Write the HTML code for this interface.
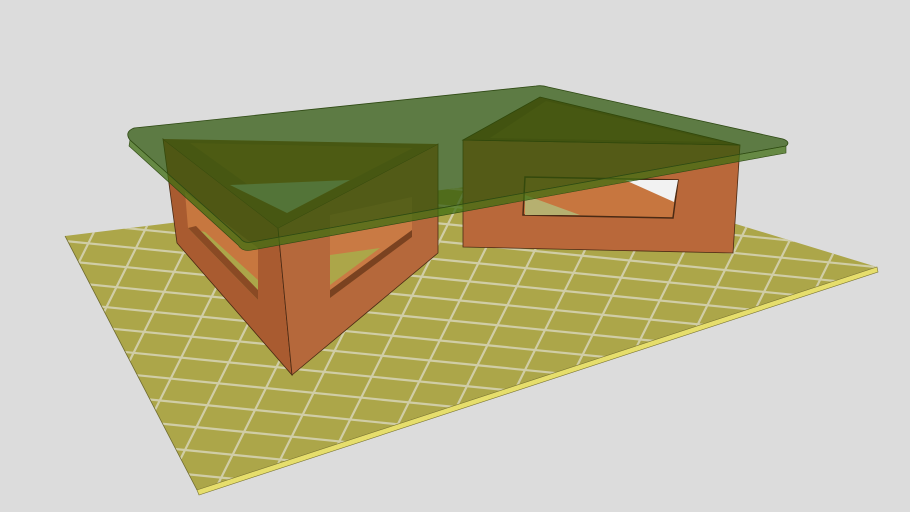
<!DOCTYPE html>
<html><head><meta charset="utf-8"><style>
html,body{margin:0;padding:0;background:#dcdcdc;width:910px;height:512px;overflow:hidden;}
svg{display:block;}
</style></head><body>
<svg width="910" height="512" viewBox="0 0 910 512" xmlns="http://www.w3.org/2000/svg">
<defs>
<clipPath id="rug"><polygon points="65,236 572,174 877,267 197,490"/></clipPath>
</defs>
<rect width="910" height="512" fill="#dcdcdc"/>
<!-- rug -->
<polygon points="65,236 572,174 877,267 197,490" fill="#aca649"/>
<g clip-path="url(#rug)" stroke="#d0cda6" stroke-width="2.2" fill="none">
<path d="M0,143.5L910,234.5M0,161.5L910,252.5M0,179.5L910,270.5M0,197.5L910,288.5M0,215.5L910,306.5M0,234.5L910,325.5M0,254.5L910,345.5M0,275.5L910,366.5M0,296.5L910,387.5M0,317.5L910,408.5M0,339.5L910,430.5M0,361.5L910,452.5M0,384.5L910,475.5M0,407.5L910,498.5M0,431.5L910,522.5M0,455.5L910,546.5M0,480.5L910,571.5M0,505.5L910,596.5M0,531.5L910,622.5M0,558.5L910,649.5"/>
<path d="M-200,520L0,120M-150,520L50,120M-100,520L100,120M-50,520L150,120M0,520L200,120M50,520L250,120M100,520L300,120M150,520L350,120M200,520L400,120M250,520L450,120M300,520L500,120M350,520L550,120M400,520L600,120M450,520L650,120M500,520L700,120M550,520L750,120M600,520L800,120M650,520L850,120M700,520L900,120M750,520L950,120M800,520L1000,120M850,520L1050,120M900,520L1100,120"/>
</g>
<polygon points="197,490 877,267 878,272 199,495" fill="#e6de6c" stroke="#7a7430" stroke-width="0.6"/>
<line x1="65" y1="236" x2="197" y2="490" stroke="#6e6a30" stroke-width="0.8"/>

<!-- left leg -->
<polygon points="163,139 278,228 292,375 177,243" fill="#a95b30" stroke="#4a2a14" stroke-width="0.8"/>
<polygon points="278,228 438,144 438,253 292,375" fill="#b5683b" stroke="#4a2a14" stroke-width="0.8"/>
<polygon points="185,192 258,248 258,300 188,228" fill="#c7773f"/>
<polygon points="188,228 258,300 258,280 205,232" fill="#aca649"/>
<polygon points="188,228 258,300 258,290 196,226" fill="#8a4a24"/>
<polygon points="330,215 412,197 412,237 330,298" fill="#c97a44"/>
<polygon points="330,255 380,248 330,285" fill="#aca649"/>
<polygon points="330,290 412,230 412,237 330,298" fill="#7a4220"/>
<polygon points="163,139 438,144 278,228" fill="#8c5a2a"/>
<polygon points="190,143 413,148 287,213" fill="#a06a2e"/>
<polygon points="230,185 350,180 287,213" fill="#b8c0b0"/>

<!-- right leg -->
<polygon points="463,140 740,145 733,253 463,247" fill="#b9683a" stroke="#4a2a14" stroke-width="0.8"/>
<polygon points="463,140 540,97 740,145" fill="#7a4e20" stroke="#3a2410" stroke-width="0.8"/>
<polygon points="490,138 546,101 720,142" fill="#8e5e28"/>
<polygon points="525,177 678,180 673,218 523,215" fill="#c7763f" stroke="#4a2a14" stroke-width="1.5"/>
<polygon points="625,180 678,180 674,202" fill="#f2f2f2"/>
<polygon points="525,195 580,215 525,215" fill="#b6b070"/>

<!-- glass -->
<path d="M134,128 L536,86 Q542,85 548,87 L783,139 Q791,142 786,146 L252,242 Q244,244 240,238 L130,140 Q124,132 134,128 Z" fill="#2c560a" fill-opacity="0.72" stroke="#2f4a14" stroke-width="0.8"/>
<path d="M130,140 L240,238 Q244,244 252,242 L786,146 L786,153 L252,250 Q242,252 238,245 L129,146 Z" fill="#3f6e12" fill-opacity="0.75" stroke="#2f4a14" stroke-width="0.6"/>
</svg>
</body></html>
